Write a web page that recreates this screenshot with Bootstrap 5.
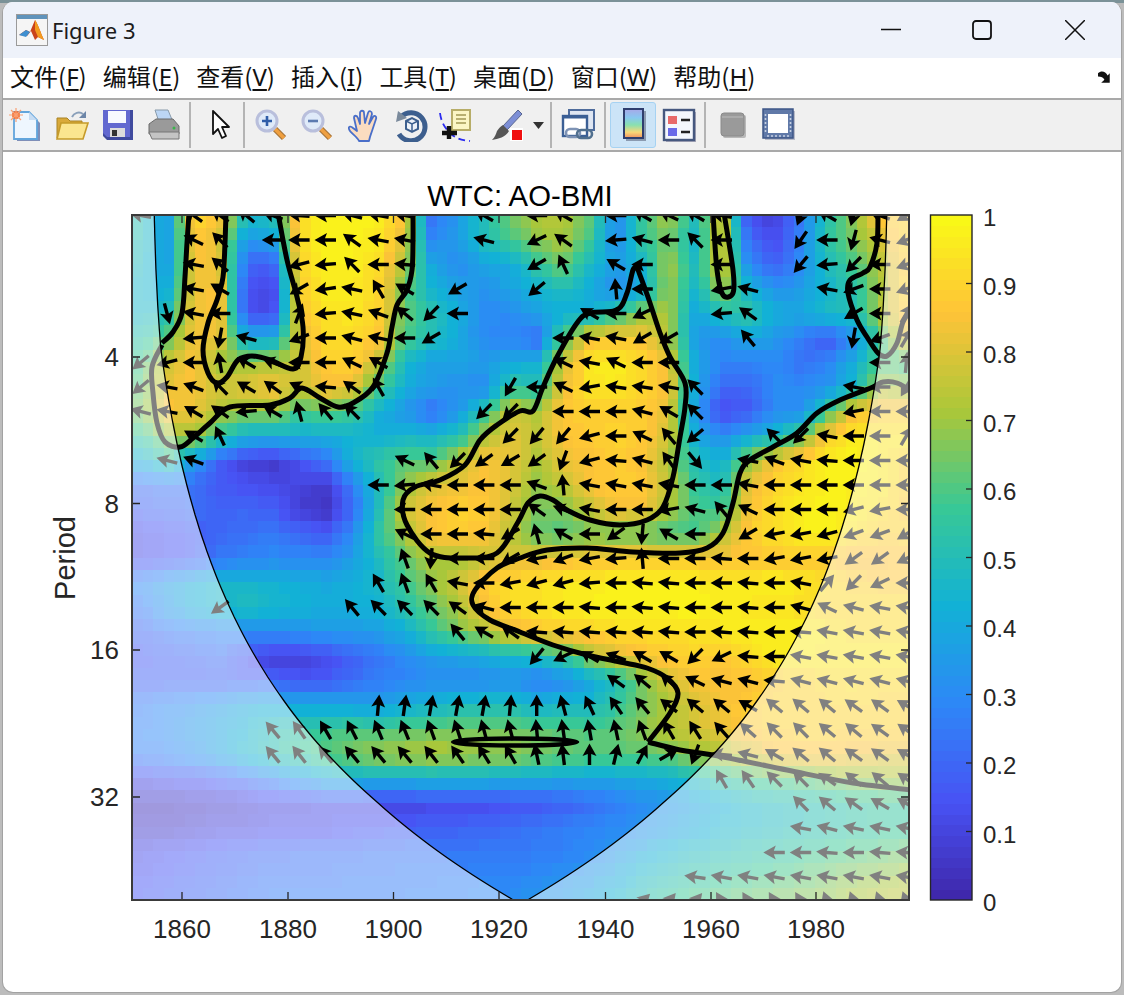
<!DOCTYPE html>
<html lang="zh">
<head>
<meta charset="utf-8">
<title>Figure 3</title>
<link href="https://cdn.jsdelivr.net/npm/bootstrap@5.3.0/dist/css/bootstrap.min.css" rel="stylesheet">
<style>
html,body{height:100%;}
body{margin:0;background:linear-gradient(#7b9298 0 3px,#bcbcbc 3px);overflow:hidden;}
.fig-window{margin:2px 2px 0;height:991px;border:1px solid #a2a2a2;border-top:0;border-radius:11px;overflow:hidden;background:#fff;}
.fig-title{height:56px;background:#eef2fa;font:22px "Noto Sans",sans-serif;color:#1c1c1c;flex:none;position:relative;}
.fig-logo{width:32px;height:32px;margin-left:13px;margin-right:4px;filter:blur(.3px);}
.win-btn{width:20px;height:20px;display:block;}
.win-btns{margin-left:auto;}
.win-min{margin-right:71px;}
.win-max{margin-right:73px;}
.win-close{margin-right:36px;}
.fig-menu{height:42px;background:#fff;border-bottom:2px solid #a9a9a9;font:24px/1 "Noto Sans CJK SC",sans-serif;color:#111;flex:none;padding:0 0 3px 7px;gap:16px;}
.fig-menu u{font-family:"Noto Sans","Noto Sans CJK SC",sans-serif;font-size:24px;text-underline-offset:3px;text-decoration-thickness:2px;}
.menu-more{margin-left:auto;margin-right:7px;}
.fig-tools{height:52px;background:#f0f0f0;border-bottom:2px solid #a9a9a9;flex:none;}
.tool{width:46px;height:46px;flex:none;display:flex;align-items:center;justify-content:center;}
.tool svg{width:34px;height:34px;display:block;filter:blur(.45px);}
.tool-on{background:#cce4f7;border:1px solid #a6d2f2;border-radius:3px;}
.tool-sep{width:2px;height:46px;background:#b4b4b4;flex:none;}
.tool-caret{width:20px;height:46px;flex:none;display:flex;align-items:center;justify-content:center;}
.ml-a{margin-left:2px;}.ml-b{margin-left:3px;}.ml-c{margin-left:4px;}.ml-d{margin-left:6px;}.ml-e{margin-left:-2px;}.ml-f{margin-left:7px;}
.fig-canvas{display:block;width:1118px;height:840px;}
.tk{font:26px "Liberation Sans",Arial,sans-serif;fill:#262626;}
.cb{font:24px "Liberation Sans",Arial,sans-serif;fill:#262626;}
.ttl{font:29.3px "Liberation Sans",Arial,sans-serif;fill:#000;}
.ylab{font:29px "Liberation Sans",Arial,sans-serif;fill:#262626;}
</style>
</head>
<body>
<div class="fig-window d-flex flex-column">
  <div class="fig-title d-flex align-items-center">
    <svg class="fig-logo" viewBox="0 0 32 32"><rect x=".5" y=".5" width="31" height="31" fill="#f5f5f5" stroke="#9a9a9a"/><rect x="1" y="1" width="30" height="4" fill="#5f93bb"/><path d="M3 21l7-5 4 2 5-12c3 4 6 14 9 20l-6-3-3 3-4-9-4 5z" fill="#c9421a"/><path d="M19 6c3 4 6 14 9 20l-6-3-3-7z" fill="#f39a1e"/><path d="M3 21l7-5 4 2-4 5z" fill="#3f8fd0"/></svg>
    <span>Figure 3</span>
    <svg class="win-btn win-btns win-min" viewBox="0 0 20 20"><path d="M0 9.500h20" stroke="#111" stroke-width="1.600"/></svg>
    <svg class="win-btn win-max" viewBox="0 0 20 20"><rect x="1" y="1" width="18" height="18" rx="3" fill="none" stroke="#111" stroke-width="1.800"/></svg>
    <svg class="win-btn win-close" viewBox="0 0 20 20"><path d="M0 0l20 20M20 0L0 20" stroke="#111" stroke-width="1.500"/></svg>
  </div>
  <div class="fig-menu d-flex align-items-center">
    <span>文件(<u>F</u>)</span><span>编辑(<u>E</u>)</span><span>查看(<u>V</u>)</span><span>插入(<u>I</u>)</span><span>工具(<u>T</u>)</span><span>桌面(<u>D</u>)</span><span>窗口(<u>W</u>)</span><span>帮助(<u>H</u>)</span>
    <svg class="menu-more" width="16" height="14" viewBox="0 0 15 13"><path d="M0 3c3-3 7-2 9 2l2-2v9H3l3-3C5 7 3 6 0 6z" fill="#111"/></svg>
  </div>
  <div class="fig-tools d-flex align-items-center">
    <div class="tool"><svg viewBox="0 0 34 34"><path d="M8 7h15l8 8v18H8z" fill="#7f8fb8"/><path d="M5 4h15l8 8v19H5z" fill="#eef6fe" stroke="#62a5dc" stroke-width="1.800"/><path d="M20 4v8h8z" fill="#c6dcf3"/><circle cx="7" cy="7" r="4" fill="#f26a2e"/><path d="M7 0v14M0 7h14M2 2l10 10M12 2L2 12" stroke="#f9a073" stroke-width="1.200"/></svg></div>
    <div class="tool"><svg viewBox="0 0 34 34"><path d="M2 10h10l3 3h12v17H2z" fill="#d9a93a" stroke="#a98324"/><path d="M6 15h27l-5 16H2z" fill="#fbe58f" stroke="#c59a2a" stroke-width="1.600"/><path d="M17 9c2-4 7-6 11-3" fill="none" stroke="#8aa0ba" stroke-width="2"/><path d="M31 3v7h-7z" fill="#6d86a8"/></svg></div>
    <div class="tool"><svg viewBox="0 0 34 34"><path d="M2 2h30v30H6l-4-4z" fill="#3f4a9e"/><path d="M2 2h27v27H6l-4-4z" fill="#6268d0"/><rect x="7" y="3" width="18" height="12" fill="#f7f9ff"/><rect x="9" y="20" width="15" height="9" fill="#dcdcdc"/><rect x="11" y="22" width="5" height="6" fill="#333"/></svg></div>
    <div class="tool"><svg viewBox="0 0 34 34"><path d="M8 2h13l5 12H12z" fill="#bcd6f5" stroke="#889aaa"/><path d="M2 16l7-5h17l6 7v8H2z" fill="#9a9a9a" stroke="#6a6a6a"/><path d="M2 24h30v7H5z" fill="#c4c4c4" stroke="#777"/><circle cx="27" cy="20" r="1.500" fill="#39b54a"/></svg></div>
    <div class="tool-sep ml-a"></div>
    <div class="tool ml-d"><svg viewBox="0 0 34 34"><path d="M10 3v23l5-5 4 9 4-2-4-9h7z" fill="#fff" stroke="#111" stroke-width="1.800" stroke-linejoin="round"/></svg></div>
    <div class="tool-sep"></div>
    <div class="tool ml-b"><svg viewBox="0 0 34 34"><path d="M21 21l9 9" stroke="#a8763a" stroke-width="6"/><path d="M21 21l9 9" stroke="#f0a040" stroke-width="3.600"/><circle cx="13" cy="13" r="10" fill="#dfeaf9" stroke="#b9bfdc" stroke-width="3"/><path d="M8 13h10M13 8v10" stroke="#2f5da8" stroke-width="2.600"/></svg></div>
    <div class="tool"><svg viewBox="0 0 34 34"><path d="M21 21l9 9" stroke="#a8763a" stroke-width="6"/><path d="M21 21l9 9" stroke="#f0a040" stroke-width="3.600"/><circle cx="13" cy="13" r="10" fill="#dfeaf9" stroke="#b9bfdc" stroke-width="3"/><path d="M8 13h10" stroke="#5b7ab0" stroke-width="2.600"/></svg></div>
    <div class="tool ml-a"><svg viewBox="0 0 34 34"><path d="M11 33c-2-5-9-8-10-12-1-3 2-3 4-1l4 3-3-13c0-3 3-3 4 0l2 6V5c0-3 4-3 4 0l1 10 3-10c1-3 4-2 4 1l-3 10 4-7c1-2 4-1 3 2l-4 12c-1 3-2 5-3 10z" fill="#fbdcc0" stroke="#4a6fc9" stroke-width="1.800" stroke-linejoin="round"/></svg></div>
    <div class="tool"><svg viewBox="0 0 34 34"><path d="M7 9A14 14 0 1 1 5 26" fill="none" stroke="#3d5f8e" stroke-width="5"/><path d="M2 14l2-11 9 7z" fill="#7a8a9c"/><path d="M12 13l6-3 6 3v8l-6 3-6-3z" fill="#eef2f8" stroke="#3d5f8e" stroke-width="2"/><path d="M12 13l6 3 6-3M18 16v8" fill="none" stroke="#3d5f8e" stroke-width="1.500"/></svg></div>
    <div class="tool ml-e"><svg viewBox="0 0 34 34"><rect x="13" y="1" width="20" height="22" fill="#b7ad68"/><rect x="15" y="3" width="16" height="18" fill="#fbf6c4"/><path d="M18 7h10M18 11h10M18 15h10" stroke="#b8b070" stroke-width="2"/><path d="M2 5c1 8 4 14 10 20s12 7 20 8" fill="none" stroke="#2b2bf0" stroke-width="1.800" stroke-dasharray="7 4"/><path d="M11 18v13M4 25h15" stroke="#111" stroke-width="4.400"/></svg></div>
    <div class="tool ml-d"><svg viewBox="0 0 34 34"><path d="M13 18L28 2l4 4-15 16z" fill="#7d8fd6" stroke="#57648f"/><path d="M13 17l6 6c-3 6-11 8-17 9 3-3 4-6 5-9 2-3 4-5 6-6z" fill="#555"/><rect x="20" y="20" width="13" height="13" fill="#fff"/><rect x="22" y="22" width="10" height="10" fill="#f01010"/></svg></div>
    <div class="tool-caret ml-e"><svg width="11" height="7" viewBox="0 0 11 7"><path d="M0 0h11L5.500 7z" fill="#333"/></svg></div>
    <div class="tool-sep ml-a"></div>
    <div class="tool ml-b"><svg viewBox="0 0 34 34"><rect x="8" y="2" width="25" height="20" fill="#dfe6f2" stroke="#4f6c9c" stroke-width="2"/><rect x="2" y="8" width="24" height="20" fill="#fff" stroke="#3b5f95" stroke-width="2.400"/><path d="M2 9h24" stroke="#3b5f95" stroke-width="3"/><rect x="5" y="21" width="14" height="8" rx="4" fill="none" stroke="#7e93b5" stroke-width="2.600"/><rect x="16" y="22" width="15" height="8" rx="4" fill="none" stroke="#51708f" stroke-width="2.600"/></svg></div>
    <div class="tool-sep ml-b"></div>
    <div class="tool tool-on ml-c"><svg viewBox="0 0 34 34"><defs><linearGradient id="cbg" x1="0" y1="0" x2="0" y2="1"><stop offset="0" stop-color="#a8a8e8"/><stop offset=".3" stop-color="#88c8f0"/><stop offset=".55" stop-color="#88e0b0"/><stop offset=".8" stop-color="#f8d878"/><stop offset="1" stop-color="#f09060"/></linearGradient></defs><rect x="10" y="3" width="20" height="30" fill="#8a9ab0"/><rect x="8" y="1" width="19" height="29" fill="url(#cbg)" stroke="#2f3e6e" stroke-width="2"/></svg></div>
    <div class="tool"><svg viewBox="0 0 34 34"><rect x="4" y="4" width="30" height="30" fill="#aaaabb"/><rect x="2" y="2" width="30" height="30" fill="#f4f7fc" stroke="#46587f" stroke-width="2.400"/><rect x="6" y="8" width="9" height="8" fill="#e86a6a"/><rect x="6" y="20" width="9" height="8" fill="#6a6ae8"/><path d="M19 12h9M19 24h9" stroke="#222" stroke-width="2.400"/></svg></div>
    <div class="tool-sep ml-a"></div>
    <div class="tool ml-c"><svg viewBox="0 0 34 34"><rect x="7" y="7" width="23" height="23" rx="2" fill="#b9b9b9"/><rect x="5" y="5" width="23" height="23" rx="3" fill="#9a9a9a" stroke="#8a8a8a"/><path d="M6 9h21" stroke="#b0b0b0" stroke-width="1.500"/></svg></div>
    <div class="tool"><svg viewBox="0 0 34 34"><rect x="3" y="3" width="30" height="29" fill="#b8bbc8"/><rect x="1" y="1" width="30" height="29" fill="#6079a8" stroke="#3d5687" stroke-width="1.500"/><rect x="6" y="6" width="20" height="19" fill="#fff"/><path d="M3.500 6v19M28.500 6v19M5 28h22" stroke="#c6d0e2" stroke-width="1.600" stroke-dasharray="2 2"/></svg></div>
  </div>
  <svg id="plot" class="fig-canvas" viewBox="3 152 1118 840"></svg>
</div>
<script src="https://cdn.jsdelivr.net/npm/bootstrap@5.3.0/dist/js/bootstrap.bundle.min.js"></script>
<script>
(function(){
var L=132,R=909,T=215,B=900;
var stops=[[62,38,168],[72,82,244],[46,135,247],[18,177,214],[55,200,151],[171,199,57],[254,195,56],[249,251,21]];
function par(v){v=Math.max(0,Math.min(1,v))*7;var i=Math.min(6,Math.floor(v)),f=v-i,a=stops[i],b=stops[i+1];
  return 'rgb('+[0,1,2].map(function(k){return Math.round(a[k]+(b[k]-a[k])*f);}).join(',')+')';}
var grid=`50 36 92 85 48 50 92 98 98 97 85 22 35 50 65 72 74 62 28 58 72 50 82 14 8 25 52 68 88 90
50 34 88 80 32 38 92 98 97 95 80 30 35 50 58 68 72 58 30 55 65 45 82 22 12 28 55 65 78 92
48 35 85 82 20 18 90 97 97 92 72 40 30 38 40 55 65 48 35 45 72 48 80 30 18 30 48 60 72 90
46 40 84 85 14 10 88 96 96 90 62 45 38 32 38 42 50 40 30 40 70 45 70 45 32 35 45 52 70 92
46 50 84 85 14 12 86 93 95 90 62 52 42 30 30 38 42 42 55 70 72 38 50 55 42 40 48 50 72 90
52 62 84 82 40 42 80 92 92 86 60 50 40 30 28 22 60 85 87 85 72 35 30 38 35 25 15 30 58 82
58 78 86 68 70 72 78 88 90 75 46 36 38 36 40 42 78 95 97 92 82 40 28 28 30 22 28 42 60 58
62 82 85 78 82 85 75 85 82 60 42 36 32 30 55 52 82 95 95 90 85 40 20 20 30 30 32 46 72 70
66 86 82 72 68 70 58 62 58 42 34 22 33 55 78 72 88 88 88 88 80 36 12 16 30 30 58 85 88 88
55 68 72 55 42 42 42 42 44 42 45 45 50 72 82 75 85 88 90 88 78 40 30 40 45 62 88 96 95 95
42 55 36 18 8 6 14 24 44 55 62 60 75 86 82 72 82 85 88 85 72 50 42 68 85 92 97 98 95 90
22 24 22 15 14 12 10 6 26 48 68 80 82 85 80 68 75 85 88 88 75 55 48 82 90 95 97 97 95 90
18 20 22 20 20 18 8 5 20 50 78 85 90 88 78 66 65 75 85 84 72 60 58 85 93 97 98 96 92 88
12 14 16 20 22 25 20 16 30 55 72 85 88 86 75 62 60 65 62 62 58 58 72 88 93 97 97 93 90 90
12 14 18 25 28 30 30 30 36 48 62 72 70 76 80 82 85 87 87 87 87 87 86 86 87 87 87 84 85 86
30 36 42 45 46 44 42 40 42 46 58 68 78 88 92 93 95 96 97 97 98 97 96 96 97 95 93 90 88 88
25 35 42 47 48 46 43 42 42 44 52 62 72 85 92 94 96 97 98 98 98 98 96 95 94 92 90 92 92 92
20 24 26 28 30 30 32 34 34 36 42 55 65 72 82 86 88 90 92 92 92 93 95 96 97 97 95 92 92 92
16 18 20 22 14 8 8 12 18 24 30 35 38 40 44 48 54 70 78 85 88 90 87 92 96 95 95 95 95 95
18 18 18 18 18 20 16 16 22 26 28 30 30 30 32 26 30 38 50 65 78 85 85 85 88 90 92 93 92 92
26 30 32 36 40 42 40 40 38 36 42 45 48 50 50 44 46 46 55 65 72 80 84 88 90 90 90 90 90 90
28 30 34 38 44 50 54 58 60 60 62 64 65 65 65 62 62 60 62 68 74 78 82 88 90 90 90 90 90 90
26 28 32 38 46 52 56 62 66 70 72 74 72 70 70 66 64 62 62 62 64 70 72 78 84 86 86 84 82 80
12 14 15 18 22 28 34 40 42 42 42 42 42 42 40 40 38 38 38 40 42 48 54 58 60 62 65 68 70 72
4 4 5 6 8 10 10 12 12 10 10 12 12 12 14 15 18 22 26 30 34 38 42 46 48 50 52 54 55 56
6 6 8 10 10 12 12 12 14 15 17 18 19 20 22 24 26 28 30 32 36 40 44 46 48 50 52 54 55 56
12 14 16 18 20 20 22 22 22 24 24 24 25 25 25 26 27 30 34 40 45 48 50 52 54 56 58 60 62 64
14 16 18 20 22 24 24 24 25 25 26 26 27 28 28 30 32 35 40 46 50 54 56 58 60 62 65 68 70 72
16 18 20 22 24 26 26 26 26 26 27 27 28 30 30 34 36 40 46 52 56 60 62 64 66 68 70 72 74 76`.split('\n').map(function(r){return r.trim().split(/\s+/).map(Number);});
var gx0=140.7,gdx=26.4,gy0=215.5,gdy=24.5;
function val(x,y){var u=Math.max(0,Math.min(28.999,(x-gx0)/gdx)),v=Math.max(0,Math.min(27.999,(y-gy0)/gdy));
  var i=Math.floor(u),j=Math.floor(v),f=u-i,g=v-j;
  return ((grid[j][i]*(1-f)+grid[j][i+1]*f)*(1-g)+(grid[j+1][i]*(1-f)+grid[j+1][i+1]*f)*g)/100;}
var s='',NX=74,NY=56,cw=(R-L)/NX,ch=(B-T)/NY,levels={};
for(var iy=0;iy<NY;iy++)for(var ix=0;ix<NX;ix++){
  var cx=L+(ix+.5)*cw,cy=T+(iy+.5)*ch,v=val(cx,cy);
  var q=Math.min(63,Math.floor(v*64));
  var d='M'+(L+ix*cw).toFixed(1)+' '+(T+iy*ch).toFixed(1)+'h'+(cw+.4).toFixed(1)+'v'+(ch+.4).toFixed(1)+'h-'+(cw+.4).toFixed(1)+'z';
  levels[q]=(levels[q]||'')+d;}
s+='<defs><clipPath id="pc"><rect x="'+L+'" y="'+T+'" width="'+(R-L)+'" height="'+(B-T)+'"/></clipPath></defs><g clip-path="url(#pc)">';
for(var k in levels)s+='<path d="'+levels[k]+'" fill="'+par((+k+.5)/64)+'" shape-rendering="crispEdges"/>';
var arrows=[
"0:10 2:35 3:35 4:40 5:20 6:5 7:0 8:15 9:10 10:10 13:30 15:0 16:30 18:0 19:30 20:25 21:30 22:10 25:-70 26:30 27:-75 28:20 29:-30",
"2:25 3:45 5:0 6:0 7:0 8:35 9:10 10:10 13:15 15:-25 16:35 18:-5 19:15 20:0 21:45 22:0 25:-55 26:0 27:-75 28:15 29:-20",
"2:10 3:40 6:-15 7:-5 8:45 9:0 10:5 15:-30 16:65 18:30 19:0 22:0 25:-50 26:-5 27:-45 28:0 29:-20",
"2:10 3:30 6:-30 7:-8 8:12 9:60 10:30 12:-30 15:-40 18:85 19:0 22:-10 23:15 26:10 27:-20 28:0 29:-20",
"1:-105 2:10 3:0 6:110 7:-5 8:12 9:20 10:40 11:-45 12:0 17:30 18:0 19:-25 22:-5 23:35 27:-30 28:0 29:120",
"2:-5 3:-80 4:15 6:-20 7:0 8:15 9:12 10:0 11:-30 16:0 17:10 18:10 19:-30 20:-30 23:50 27:-80 28:-20 29:120",
"0:-40 1:-15 2:0 3:80 4:30 5:20 6:0 7:0 8:25 9:30 16:25 17:10 18:25 19:0 20:0 28:0 29:95",
"0:-40 1:10 2:20 3:45 4:30 5:35 6:25 7:5 8:35 9:60 14:-60 15:0 16:25 17:-10 18:8 19:8 20:10 21:45 27:10 28:0 29:-60",
"0:15 1:10 2:30 3:35 4:-5 5:30 6:75 7:50 8:45 13:-45 14:-45 16:0 17:0 18:0 19:15 20:30 21:45 27:-10 28:0 29:0",
"2:30 3:65 14:-45 15:-50 16:-50 17:-15 18:0 19:25 20:50 21:-40 24:45 25:-45 26:10 27:0 28:0 29:120",
"1:15 2:20 10:25 11:50 12:-45 13:-35 14:-30 15:-35 16:-70 17:-15 18:5 19:15 20:55 21:-130 23:10 24:20 25:10 26:5 27:0 28:0 29:0",
"9:0 10:-5 11:10 12:0 13:0 14:0 15:20 16:85 17:10 18:10 19:10 20:10 21:0 22:0 23:10 24:0 25:0 26:0 27:0 28:0 29:0",
"10:0 11:0 12:0 13:0 14:0 15:35 16:20 17:10 18:0 19:0 20:-10 21:15 22:50 23:25 24:0 25:0 26:0 27:-15 28:-10 29:0",
"10:25 11:0 12:0 13:5 14:-30 15:75 16:30 17:0 18:-35 19:-85 20:30 21:0 23:-30 24:-10 25:-10 26:-15 27:-20 28:-20 29:-30",
"10:70 11:-85 12:0 13:0 14:-30 15:-10 16:-20 17:-10 18:-5 19:85 20:0 21:0 22:5 23:0 24:-10 25:-10 26:-10 27:-35 28:-35 29:-25",
"9:60 10:70 11:60 12:10 13:0 14:-10 15:-15 16:-15 17:-5 18:0 19:5 20:5 21:0 22:0 23:5 24:0 25:10 26:130 27:-45 28:-25 29:0",
"3:-35 8:50 9:45 10:45 11:45 12:35 13:15 14:0 15:0 16:0 17:5 18:0 19:5 20:5 21:0 22:0 23:5 24:0 25:15 26:25 27:15 28:10 29:10",
"12:50 13:30 14:35 15:5 16:5 17:5 18:5 19:5 20:5 21:0 22:5 23:5 24:0 25:5 26:10 27:10 28:10 29:10",
"15:-50 16:-25 17:30 18:20 19:30 20:30 21:-45 22:-25 23:5 24:0 25:10 26:10 27:10 28:10 29:10",
"18:35 19:40 20:40 21:25 22:15 23:15 24:5 25:15 26:15 27:15 28:15 29:15",
"9:95 10:98 11:100 12:100 13:100 14:95 15:90 16:75 17:65 18:55 19:50 20:38 21:40 22:40 23:30 24:40 25:40 26:40 27:35 28:35 29:30",
"5:50 6:55 7:60 8:63 9:68 10:68 11:70 12:72 13:75 14:75 15:85 16:82 17:80 18:78 19:70 20:60 21:58 22:48 23:42 24:45 25:45 26:40 27:40 28:35 29:35",
"5:50 6:52 7:50 8:50 9:50 10:50 11:52 12:55 13:58 14:60 15:78 16:83 17:90 18:103 19:118 20:150 21:-70 22:5 23:15 24:30 25:40 26:40 27:35 28:35 29:30",
"22:60 23:55 24:45 25:45 26:35 27:40 28:40 29:35",
"25:45 26:40 27:35 28:30 29:30",
"25:10 26:15 27:12 28:12 29:12",
"24:0 25:0 26:5 27:0 28:5 29:5",
"21:8 22:10 23:10 24:10 25:10 26:10 27:10 28:10 29:10",
"19:135 20:130 21:130 22:60 23:60 24:60 25:60 26:70 27:70 28:70 29:70"];
var aw='';
arrows.forEach(function(row,r){row.split(' ').forEach(function(t){var p=t.split(':');var x=gx0+gdx*(+p[0]),y=gy0+gdy*r;
  aw+='<path transform="translate('+x.toFixed(1)+' '+y.toFixed(1)+') rotate('+p[1]+')" d="M-11 0L1.500-7-.5-1.700H10.500V1.700H-.5L1.500 7z"/>';});});
s+='<g fill="#000">'+aw+'</g>';
function spline(pts){var n=pts.length,d='M'+pts[0].join(' ');
  for(var i=0;i<n-1;i++){var p0=pts[Math.max(0,i-1)],p1=pts[i],p2=pts[i+1],p3=pts[Math.min(n-1,i+2)];
    d+='C'+(p1[0]+(p2[0]-p0[0])/6).toFixed(1)+' '+(p1[1]+(p2[1]-p0[1])/6).toFixed(1)+' '+(p2[0]-(p3[0]-p1[0])/6).toFixed(1)+' '+(p2[1]-(p3[1]-p1[1])/6).toFixed(1)+' '+p2[0]+' '+p2[1];}
  return d;}
var cont=[
 [[189,213],[187,243],[185,277],[182,313],[173,332],[162,343]],
 [[226,213],[225,243],[223,277],[217,300],[208,323],[203,350],[208,373],[217,383],[227,377],[238,360],[252,356],[270,360],[293,369],[301,357],[303,327],[297,297],[287,260],[278,213]],
 [[413,213],[413,243],[412,270],[407,290],[397,305],[392,327],[387,353],[373,387],[353,403],[338,407],[320,398],[302,388],[290,398],[270,405],[230,407],[210,423],[193,438],[180,447],[165,442],[157,423],[153,393],[152,367],[162,345]],
 [[637,267],[648,297],[660,333],[670,357],[685,383],[685,407],[680,437],[673,477],[663,507],[647,520],[620,525],[590,520],[567,510],[553,500],[540,496],[528,503],[518,522],[497,553],[463,558],[430,553],[407,525],[403,500],[415,487],[440,480],[465,465],[480,440],[497,425],[520,411],[533,411],[543,387],[557,357],[577,323],[590,313],[617,310],[627,293],[633,270],[637,267]],
 [[913,392],[897,383],[883,382],[873,387],[840,400],[817,413],[797,433],[773,447],[750,460],[740,473],[733,503],[723,533],[707,548],[680,553],[633,552],[587,548],[547,550],[520,558],[497,568],[475,590],[473,605],[490,620],[520,632],[553,645],[587,655],[620,662],[647,668],[667,678],[678,693],[670,713],[648,742]],
 [[648,742],[680,750],[713,755],[787,770],[853,783],[912,790]],
 [[878,213],[877,243],[870,267],[863,273],[850,280],[848,293],[857,320],[867,337],[878,353],[887,356],[897,343],[903,322],[912,308]],
 [[713,213],[717,270],[723,295],[733,293],[733,270],[724,213]]
];
cont.forEach(function(c){s+='<path d="'+spline(c)+'" fill="none" stroke="#000" stroke-width="5" stroke-linejoin="round"/>';});
s+='<ellipse cx="515" cy="742" rx="62" ry="3.500" fill="none" stroke="#000" stroke-width="4.500"/>';
function coi(y){var p=4*Math.pow(2,(y-357)/146.7),d=p/.707*5.29;
  if(y>800)d*=1-(y-800)/100*.02; if(y<350)d+=(350-y)/135*7; return d;}
var lp=[],rp=[];
for(var y=T;y<=B;y+=6){var dd=coi(y);lp.push((L+dd).toFixed(1)+' '+y);rp.unshift((R-dd).toFixed(1)+' '+y);}
var mid=lp.join(' L')+' L'+(L+coi(B)).toFixed(1)+' '+B+' L'+(R-coi(B)).toFixed(1)+' '+B+' L'+rp.join(' L');
s+='<path d="M'+L+' '+T+' L'+mid+' L'+R+' '+T+' L'+R+' '+B+' L'+L+' '+B+'z" fill="#fff" fill-opacity=".5"/>';
s+='<path d="M'+mid+'" fill="none" stroke="#000" stroke-width="1.300"/>';
s+='</g>';
var ax='';
[182,288,393.500,499,605.500,711,816].forEach(function(x,i){
  ax+='<path d="M'+x+' '+B+'v-8M'+x+' '+T+'v8" stroke="#262626" stroke-width="1.300"/>';
  s+='<text class="tk" x="'+x+'" y="938" text-anchor="middle">'+(1860+i*20)+'</text>';});
[[357,'4'],[503.500,'8'],[650,'16'],[797,'32']].forEach(function(a){
  ax+='<path d="M'+L+' '+a[0]+'h8M'+R+' '+a[0]+'h-8" stroke="#262626" stroke-width="1.300"/>';
  s+='<text class="tk" x="119" y="'+(a[0]+9)+'" text-anchor="end">'+a[1]+'</text>';});
s+=ax+'<rect x="'+L+'" y="'+T+'" width="'+(R-L)+'" height="'+(B-T)+'" fill="none" stroke="#3a3a3a" stroke-width="2"/>';
s+='<text class="ttl" x="520" y="206" text-anchor="middle">WTC: AO-BMI</text>';
s+='<text class="ylab" transform="translate(75 558) rotate(-90)" text-anchor="middle">Period</text>';
var cbx=930.500,cbw=41.500,cbh=(B-T)/64;
for(var c=0;c<64;c++)s+='<rect x="'+cbx+'" y="'+(B-(c+1)*cbh).toFixed(2)+'" width="'+cbw+'" height="'+(cbh+.4).toFixed(2)+'" fill="'+par((c+.5)/64)+'" shape-rendering="crispEdges"/>';
for(var t=0;t<=10;t++){var yy=B-t*68.5;
  if(t>0&&t<10)s+='<path d="M'+(cbx+cbw)+' '+yy+'h-6" stroke="#262626" stroke-width="1.300"/>';
  s+='<text class="cb" x="983" y="'+(yy+11)+'">'+(t==10?'1':t==0?'0':'0.'+t)+'</text>';}
s+='<rect x="'+cbx+'" y="'+T+'" width="'+cbw+'" height="'+(B-T)+'" fill="none" stroke="#262626" stroke-width="1.400"/>';
document.getElementById('plot').innerHTML=s;
})();
</script>
</body>
</html>
